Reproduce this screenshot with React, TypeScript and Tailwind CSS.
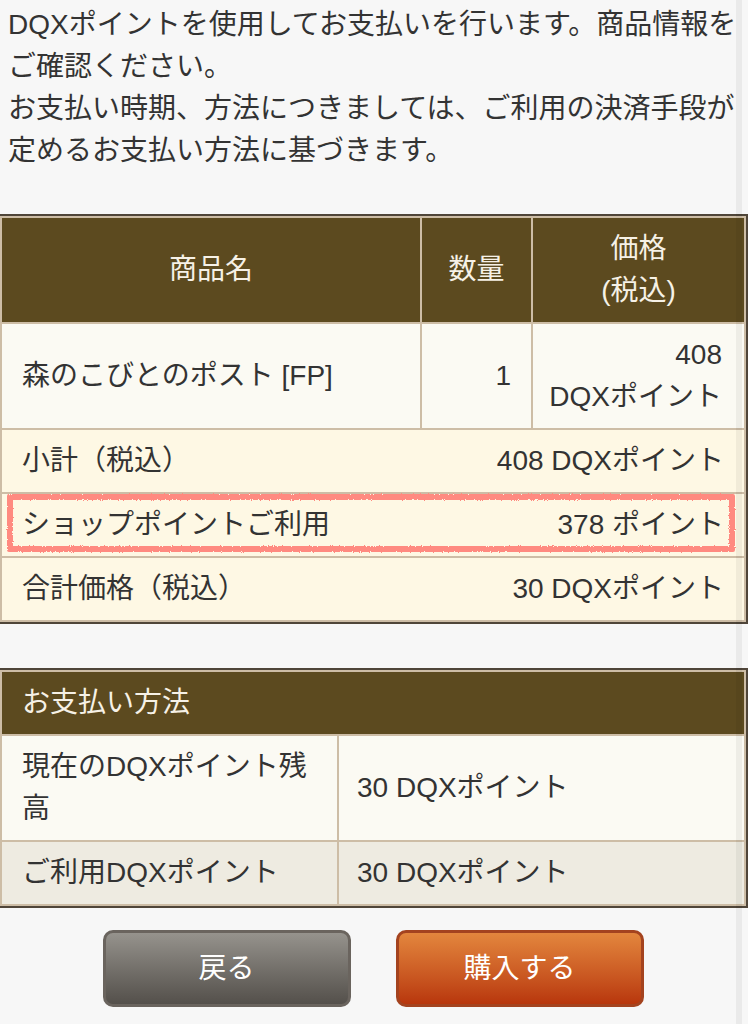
import type { ReactNode } from "react";

const font = "font-['Liberation_Sans','Noto_Sans_CJK_JP',sans-serif]";

// Light tan grid line used inside both tables.
const cell = "border-2 border-[#cdbda6]";

function Frame({ children }: { children: ReactNode }) {
  return (
    <div className="w-[748px] border-y-2 border-r-2 border-[#4f4539]">
      {children}
    </div>
  );
}

function SummaryRow({ label, value, mark }: { label: string; value: string; mark?: boolean }) {
  return (
    <tr className="bg-[#fef8e4]">
      <td colSpan={3} className={`${cell} p-0`}>
        <div className="relative flex justify-between px-[20px] py-[10px]">
          <span>{label}</span>
          <span>{value}</span>
          {mark && (
            <span className="pointer-events-none absolute left-[5px] right-[9px] top-[0px] bottom-[4px] rounded-[2px] border-[6px] border-[#ff8a80] [filter:url(#rough)]" />
          )}
        </div>
      </td>
    </tr>
  );
}

export default function App() {
  return (
    <div className={`relative min-h-[1024px] overflow-hidden bg-[#f7f7f7] text-[28px] leading-[42px] text-[#333] ${font}`}>
      <svg width="0" height="0" className="absolute">
        <filter id="rough">
          <feTurbulence type="fractalNoise" baseFrequency="0.9" numOctaves="2" />
          <feDisplacementMap in="SourceGraphic" scale="3" />
        </filter>
      </svg>

      <p className="pl-2 pr-1 pt-[4px]">
        DQXポイントを使用してお支払いを行います。商品情報をご確認ください。
        <br />
        お支払い時期、方法につきましては、ご利用の決済手段が定めるお支払い方法に基づきます。
      </p>

      <div className="mt-[42px]">
        <Frame>
          <table className="w-[746px] table-fixed border-collapse">
            <colgroup>
              <col className="w-[420px]" />
              <col className="w-[111px]" />
              <col />
            </colgroup>
            <thead>
              <tr className="bg-[#5c4a1f] text-[#f6f1e6]">
                <th className={`${cell} py-[10px] font-normal`}>商品名</th>
                <th className={`${cell} py-[10px] font-normal`}>数量</th>
                <th className={`${cell} py-[10px] font-normal`}>
                  価格
                  <br />
                  (税込)
                </th>
              </tr>
            </thead>
            <tbody>
              <tr className="bg-[#fbfaf3]">
                <td className={`${cell} px-[20px] py-[10px]`}>森のこびとのポスト [FP]</td>
                <td className={`${cell} px-[20px] py-[10px] text-right`}>1</td>
                <td className={`${cell} whitespace-nowrap py-[10px] pl-[4px] pr-[22px] text-right`}>
                  408
                  <br />
                  DQXポイント
                </td>
              </tr>
              <SummaryRow label="小計（税込）" value="408 DQXポイント" />
              <SummaryRow label="ショップポイントご利用" value="378 ポイント" mark />
              <SummaryRow label="合計価格（税込）" value="30 DQXポイント" />
            </tbody>
          </table>
        </Frame>
      </div>

      <div className="mt-[44px]">
        <Frame>
          <table className="w-[746px] table-fixed border-collapse">
            <colgroup>
              <col className="w-[337px]" />
              <col />
            </colgroup>
            <thead>
              <tr className="bg-[#5c4a1f] text-[#f6f1e6]">
                <th colSpan={2} className={`${cell} px-[20px] py-[10px] text-left font-normal`}>
                  お支払い方法
                </th>
              </tr>
            </thead>
            <tbody>
              <tr className="bg-[#fbfaf3]">
                <td className={`${cell} px-[20px] py-[10px]`}>現在のDQXポイント残高</td>
                <td className={`${cell} px-[18px] py-[10px]`}>30 DQXポイント</td>
              </tr>
              <tr className="bg-[#eeebe1]">
                <td className={`${cell} px-[20px] py-[10px]`}>ご利用DQXポイント</td>
                <td className={`${cell} px-[18px] py-[10px]`}>30 DQXポイント</td>
              </tr>
            </tbody>
          </table>
        </Frame>
      </div>

      <div className="mt-[22px] flex justify-center gap-[45px] pr-[2px]">
        <button className="h-[77px] w-[248px] rounded-[10px] border-[3px] border-[#6a645e] bg-gradient-to-b from-[#96938d] to-[#54504b] text-[28px] text-white">
          戻る
        </button>
        <button className="h-[77px] w-[248px] rounded-[10px] border-[3px] border-[#a4431f] bg-gradient-to-b from-[#e3863d] to-[#b8360c] text-[28px] text-white">
          購入する
        </button>
      </div>

      {/* scroll indicator strip along the right edge */}
      <div className="pointer-events-none absolute inset-y-0 left-[736px] w-[6px] bg-black/[0.05]" />
    </div>
  );
}
